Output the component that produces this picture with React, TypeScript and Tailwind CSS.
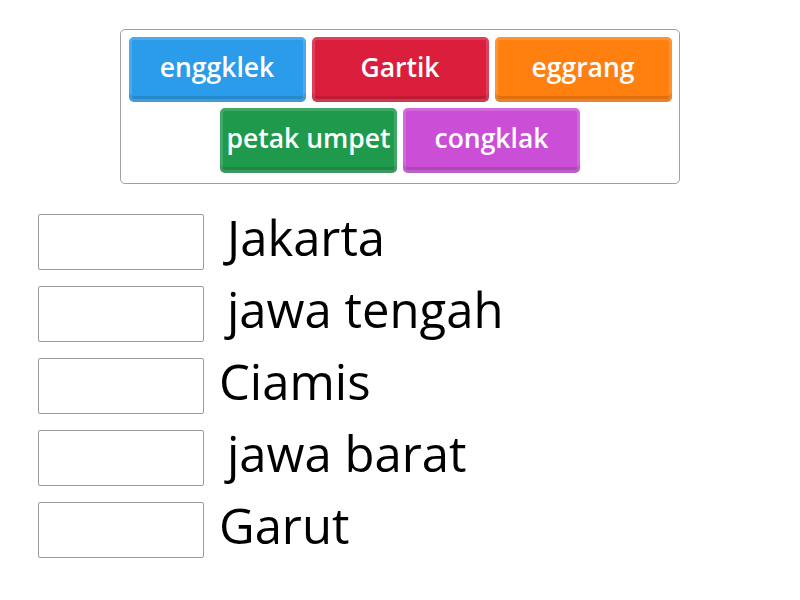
import React from 'react';

const cards = [
  { label: 'enggklek', color: 'bg-[#2b9cea]' },
  { label: 'Gartik', color: 'bg-[#da1e3b]' },
  { label: 'eggrang', color: 'bg-[#ff7f0f]' },
  { label: 'petak umpet', color: 'bg-[#1f9a4c]' },
  { label: 'congklak', color: 'bg-[#cb4fd6]' },
];

const targets = [
  { label: 'Jakarta', indent: 'ml-[23px]' },
  { label: 'jawa tengah', indent: 'ml-[23px]' },
  { label: 'Ciamis', indent: 'ml-[15px]' },
  { label: 'jawa barat', indent: 'ml-[23px]' },
  { label: 'Garut', indent: 'ml-[15px]' },
];

const App = () => {
  return (
    <div className="w-[800px] h-[600px] bg-white font-['Open_Sans',sans-serif]">
      <div className="pt-[29px] pl-[120px]">
        <div className="w-[560px] h-[155px] border border-[#a0a0a0] rounded-[5px] px-[7px] pt-[7px] flex flex-wrap justify-center content-start gap-[6px]">
          {cards.map((c) => (
            <div
              key={c.label}
              className={`${c.color} w-[177px] h-[65px] rounded-[5px] flex items-center justify-center text-white text-[26.5px] font-semibold leading-none pb-[5px] shadow-[inset_0_0_0_3px_rgba(255,255,255,0.15),inset_0_-6px_0_rgba(0,0,0,0.12)]`}
            >
              {c.label}
            </div>
          ))}
        </div>
      </div>

      <div className="pl-[38px] pt-[30px] flex flex-col gap-[16px]">
        {targets.map((t) => (
          <div key={t.label} className="flex items-center h-[56px]">
            <div className="w-[166px] h-[56px] border border-[#9a9a9a] rounded-[2px] bg-white shrink-0" />
            <span className={`${t.indent} text-[49px] text-black leading-none pb-[9px]`}>{t.label}</span>
          </div>
        ))}
      </div>
    </div>
  );
};

export default App;
